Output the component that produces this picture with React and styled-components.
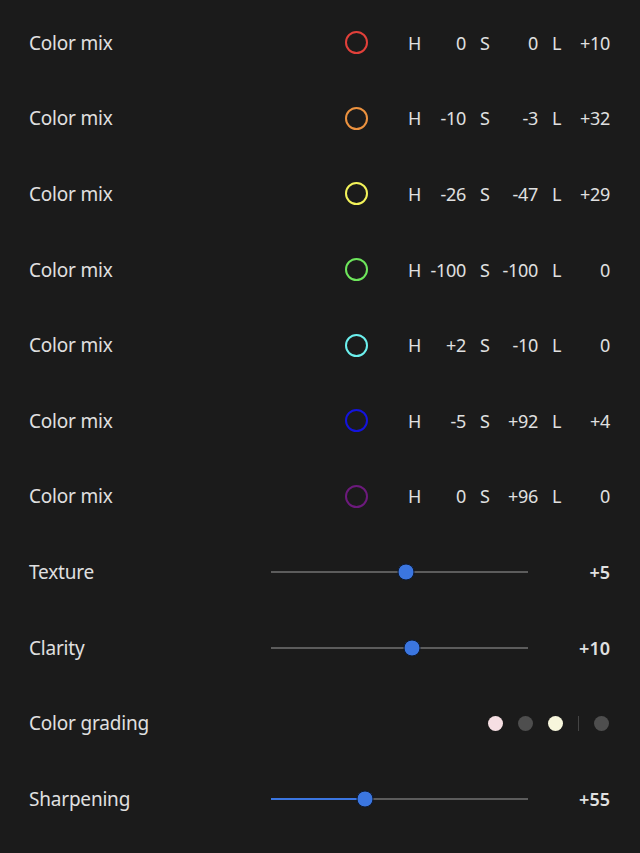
import React from "react";
import styled, { createGlobalStyle } from "styled-components";

const GlobalStyle = createGlobalStyle`
  body {
    margin: 0;
    background: #1b1b1b;
    font-family: "Noto Sans", "Open Sans", sans-serif;
  }
`;

const Panel = styled.div`
  width: 640px;
  height: 853px;
  box-sizing: border-box;
  padding: 5px 30px 0 29px;
  background: #1b1b1b;
  color: #e0e0e0;
`;

const Row = styled.div`
  height: 75.6px;
  display: flex;
  align-items: center;
`;

const Label = styled.div`
  flex: 1;
  font-size: 19px;
  letter-spacing: -0.2px;
`;

const Swatch = styled.div`
  width: 23px;
  height: 23px;
  box-sizing: border-box;
  border-radius: 50%;
  border: 2.6px solid ${(p) => p.color};
  margin-left: -1.5px;
  margin-right: 40.5px;
`;

const Pair = styled.div`
  display: flex;
  align-items: center;
  margin-left: ${(p) => (p.first ? 0 : 14)}px;
  font-size: 18px;
`;

const Letter = styled.span`
  width: 13px;
`;

const Value = styled.span`
  width: 45px;
  text-align: right;
  letter-spacing: -0.3px;
`;

const Track = styled.div`
  position: relative;
  width: 257px;
  height: 2px;
  background: #5c5c5c;
  margin-right: 56px;
`;

const Fill = styled.div`
  height: 100%;
  background: #3b76e0;
`;

const Thumb = styled.div`
  position: absolute;
  top: 50%;
  width: 17px;
  height: 17px;
  box-sizing: border-box;
  border-radius: 50%;
  background: #3b76e0;
  border: 1px solid #0d1a33;
  transform: translate(-50%, -50%);
`;

const SliderValue = styled.div`
  width: 26px;
  font-size: 18px;
  font-weight: 600;
  white-space: nowrap;
  display: flex;
  justify-content: flex-end;
`;

const Dots = styled.div`
  display: flex;
  align-items: center;
  gap: 15px;
  margin-right: 1px;
`;

const Dot = styled.div`
  width: 15px;
  height: 15px;
  border-radius: 50%;
  background: ${(p) => p.color};
`;

const Divider = styled.div`
  width: 1px;
  height: 15px;
  background: #444;
`;

const mixes = [
  { color: "#e2403a", h: "0", s: "0", l: "+10" },
  { color: "#ec923f", h: "-10", s: "-3", l: "+32" },
  { color: "#f3f35a", h: "-26", s: "-47", l: "+29" },
  { color: "#6ee65c", h: "-100", s: "-100", l: "0" },
  { color: "#6cf0ee", h: "+2", s: "-10", l: "0" },
  { color: "#1414dc", h: "-5", s: "+92", l: "+4" },
  { color: "#6c1a7c", h: "0", s: "+96", l: "0" },
];

const Slider = ({ label, pos, value, filled }) => (
  <Row>
    <Label>{label}</Label>
    <Track>
      {filled && <Fill style={{ width: `${pos}px` }} />}
      <Thumb style={{ left: `${pos}px` }} />
    </Track>
    <SliderValue>{value}</SliderValue>
  </Row>
);

export default function App() {
  return (
    <>
      <GlobalStyle />
      <Panel>
        {mixes.map((m, i) => (
          <Row key={i}>
            <Label>Color mix</Label>
            <Swatch color={m.color} />
            <Pair first>
              <Letter>H</Letter>
              <Value>{m.h}</Value>
            </Pair>
            <Pair>
              <Letter>S</Letter>
              <Value>{m.s}</Value>
            </Pair>
            <Pair>
              <Letter>L</Letter>
              <Value>{m.l}</Value>
            </Pair>
          </Row>
        ))}
        <Slider label="Texture" pos={135} value="+5" />
        <Slider label="Clarity" pos={141} value="+10" />
        <Row>
          <Label>Color grading</Label>
          <Dots>
            <Dot color="#f6dfe3" />
            <Dot color="#4e4e4e" />
            <Dot color="#f7f6dc" />
            <Divider />
            <Dot color="#4e4e4e" />
          </Dots>
        </Row>
        <Slider label="Sharpening" pos={94} value="+55" filled />
      </Panel>
    </>
  );
}
